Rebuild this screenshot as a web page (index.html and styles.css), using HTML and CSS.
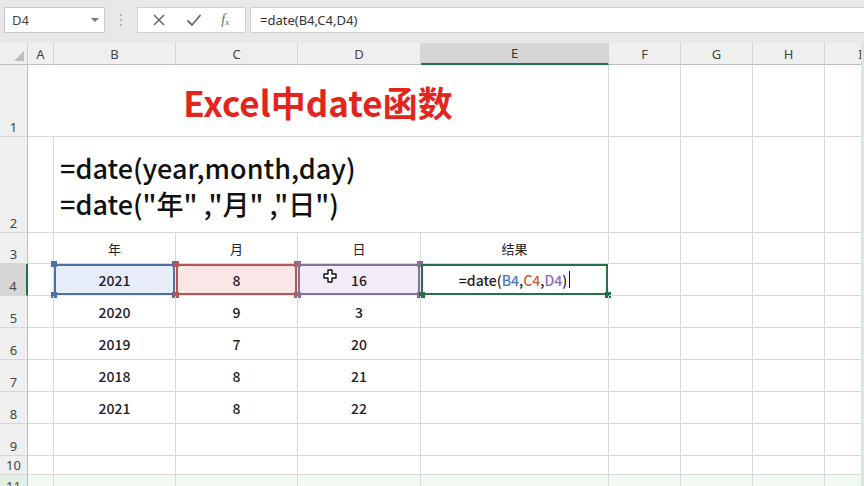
FILE: index.html
```html
<!DOCTYPE html>
<html>
<head>
<meta charset="utf-8">
<link rel="stylesheet" href="styles.css">
</head>
<body>
<div class="toolbar">
  <div class="namebox"><span class="ref">D4</span><span class="dd">
    <svg width="8" height="5" viewBox="0 0 8 5"><path d="M0 0 L8 0 L4 4 Z" fill="#777"/></svg></span></div>
  <div class="grip"><i></i><i></i><i></i></div>
  <div class="fxbtns">
    <svg width="14" height="14" viewBox="0 0 14 14"><path d="M2 2 L12 12 M12 2 L2 12" stroke="#6b6b6b" stroke-width="1.6" fill="none"/></svg>
    <svg width="16" height="14" viewBox="0 0 16 14"><path d="M1.5 7.5 L6 12 L14.5 2" stroke="#6b6b6b" stroke-width="1.8" fill="none"/></svg>
    <span class="fx">f<sub>x</sub></span>
  </div>
  <div class="formula">=date(B4,C4,D4)</div>
</div>

<div class="sheet">
  <!-- header row -->
  <div class="corner"><svg width="10" height="10" viewBox="0 0 10 10"><path d="M10 0 L10 10 L0 10 Z" fill="#bdbdbd"/></svg></div>
  <div class="ch">A</div><div class="ch">B</div><div class="ch">C</div><div class="ch">D</div>
  <div class="ch sel">E</div><div class="ch">F</div><div class="ch">G</div><div class="ch">H</div><div class="ch">I</div>

  <!-- row 1 -->
  <div class="rh">1</div>
  <div class="c title">Excel中date函数</div>
  <div class="c"></div><div class="c"></div><div class="c"></div><div class="c"></div>

  <!-- row 2 -->
  <div class="rh">2</div>
  <div class="c"></div>
  <div class="c syntax"><div>=date(year,month,day)</div><div>=date("年" ,"月" ,"日")</div></div>
  <div class="c"></div><div class="c"></div><div class="c"></div><div class="c"></div>

  <!-- row 3 -->
  <div class="rh">3</div>
  <div class="c"></div><div class="c hd">年</div><div class="c hd">月</div><div class="c hd">日</div><div class="c hd">结果</div>
  <div class="c"></div><div class="c"></div><div class="c"></div><div class="c"></div>

  <!-- row 4 -->
  <div class="rh sel">4</div>
  <div class="c"></div>
  <div class="c num rb">2021<i class="h tl"></i><i class="h tr"></i><i class="h bl"></i><i class="h br"></i></div>
  <div class="c num rc">8<i class="h tl"></i><i class="h tr"></i><i class="h bl"></i><i class="h br"></i></div>
  <div class="c num rd">16<svg class="cross" width="14" height="14" viewBox="0 0 14 14"><path d="M5 1 H9 V5 H13 V9 H9 V13 H5 V9 H1 V5 H5 Z" fill="#fff" stroke="#111" stroke-width="1.4" stroke-linejoin="round"/></svg><i class="h tl"></i><i class="h tr"></i><i class="h bl"></i><i class="h br"></i></div>
  <div class="c num re">=date(<span class="kb">B4</span>,<span class="kc">C4</span>,<span class="kd">D4</span>)<span class="caret"></span><i class="h bl"></i><i class="h br"></i></div>
  <div class="c"></div><div class="c"></div><div class="c"></div><div class="c"></div>

  <!-- row 5 -->
  <div class="rh">5</div>
  <div class="c"></div><div class="c num">2020</div><div class="c num">9</div><div class="c num">3</div><div class="c"></div>
  <div class="c"></div><div class="c"></div><div class="c"></div><div class="c"></div>

  <!-- row 6 -->
  <div class="rh">6</div>
  <div class="c"></div><div class="c num">2019</div><div class="c num">7</div><div class="c num">20</div><div class="c"></div>
  <div class="c"></div><div class="c"></div><div class="c"></div><div class="c"></div>

  <!-- row 7 -->
  <div class="rh">7</div>
  <div class="c"></div><div class="c num">2018</div><div class="c num">8</div><div class="c num">21</div><div class="c"></div>
  <div class="c"></div><div class="c"></div><div class="c"></div><div class="c"></div>

  <!-- row 8 -->
  <div class="rh">8</div>
  <div class="c"></div><div class="c num">2021</div><div class="c num">8</div><div class="c num">22</div><div class="c"></div>
  <div class="c"></div><div class="c"></div><div class="c"></div><div class="c"></div>

  <!-- row 9 -->
  <div class="rh">9</div>
  <div class="c"></div><div class="c"></div><div class="c"></div><div class="c"></div><div class="c"></div>
  <div class="c"></div><div class="c"></div><div class="c"></div><div class="c"></div>

  <!-- row 10 -->
  <div class="rh">10</div>
  <div class="c"></div><div class="c"></div><div class="c"></div><div class="c"></div><div class="c"></div>
  <div class="c"></div><div class="c"></div><div class="c"></div><div class="c"></div>

  <!-- row 11 -->
  <div class="rh last">11</div>
  <div class="c g"></div><div class="c g"></div><div class="c g"></div><div class="c g"></div><div class="c g"></div>
  <div class="c g"></div><div class="c g"></div><div class="c g"></div><div class="c g"></div>
</div>
<div class="edge"></div>
</body>
</html>
```
FILE: styles.css
```css
* { box-sizing: border-box; }
html, body { margin: 0; padding: 0; }
body {
  position: relative;
  width: 864px;
  height: 486px;
  overflow: hidden;
  background: #e8e8e8;
  font-family: "Noto Sans CJK SC", "Noto Sans", sans-serif;
  color: #222;
}

.toolbar {
  height: 43px;
  display: flex;
  align-items: flex-start;
  padding: 7px 0 0 4px;
  background: #e8e8e8;
}
.namebox {
  width: 101px;
  height: 26px;
  background: #fff;
  border: 1px solid #c8c8c8;
  display: flex;
  align-items: center;
  justify-content: space-between;
  padding: 0 5px 0 7px;
  font-family: "Noto Sans", "Liberation Sans", sans-serif;
  font-size: 13px;
  color: #444;
}
.dd { display: flex; align-items: center; }
.grip {
  width: 32px;
  height: 26px;
  display: flex;
  flex-direction: column;
  align-items: center;
  justify-content: center;
  gap: 3px;
}
.grip i { width: 2px; height: 2px; background: #b5b5b5; display: block; }
.fxbtns {
  width: 109px;
  height: 26px;
  background: #fff;
  border: 1px solid #d0d0d0;
  display: flex;
  align-items: center;
  justify-content: space-around;
  padding: 0 6px 0 4px;
}
.fx {
  font-family: "Liberation Serif", serif;
  font-style: italic;
  font-size: 14px;
  color: #6b6b6b;
}
.fx sub { font-size: 9px; vertical-align: -1px; }
.formula {
  flex: 1;
  height: 26px;
  margin-left: 4px;
  background: #fff;
  border: 1px solid #d0d0d0;
  border-right: none;
  padding-left: 9px;
  display: flex;
  align-items: center;
  font-family: "Noto Sans", "Liberation Sans", sans-serif;
  font-size: 13px;
  color: #333;
}

.sheet {
  display: grid;
  width: 897px;
  grid-template-columns: 28px 26px 122px 122px 123px 188px 72px 72px 72px 72px;
  grid-template-rows: 22px 72px 96px 31px 32px 32px 32px 32px 32px 32px 19px 12px;
  background: #fff;
}
.corner {
  background: #efefef;
  border-right: 1px solid #cfcfcf;
  border-bottom: 1px solid #bfbfbf;
  display: flex;
  align-items: flex-end;
  justify-content: flex-end;
  padding: 0 3px 3px 0;
}
.ch {
  background: #efefef;
  border-right: 1px solid #d4d4d4;
  border-bottom: 1px solid #bfbfbf;
  display: flex;
  align-items: center;
  justify-content: center;
  font-family: "Noto Sans", "Liberation Sans", sans-serif;
  font-size: 13px;
  color: #444;
}
.ch.sel {
  background: #d6d6d6;
  border-bottom: 2px solid #217346;
  color: #333;
}
.rh {
  background: #efefef;
  border-right: 1px solid #bfbfbf;
  border-bottom: 1px solid #d6d6d6;
  display: flex;
  align-items: flex-end;
  justify-content: center;
  padding-bottom: 1px;
  overflow: hidden;
  font-family: "Noto Sans", "Liberation Sans", sans-serif;
  font-size: 13px;
  line-height: 16px;
  color: #444;
}
.rh.sel {
  background: #d6d6d6;
  border-right: 2px solid #217346;
}
.rh.last {
  align-items: flex-start;
  padding: 3px 0 0;
  background: #e4efe6;
  border-bottom: none;
}
.c {
  position: relative;
  border-right: 1px solid #d9d9d9;
  border-bottom: 1px solid #d9d9d9;
  display: flex;
  align-items: center;
  justify-content: center;
}
.c.g { background: #f2f9f3; border-bottom: none; }

.title {
  grid-column: span 5;
  font-size: 35px;
  font-weight: 700;
  color: #e3261d;
  padding-top: 2px;
}
.syntax {
  grid-column: span 4;
  flex-direction: column;
  align-items: flex-start;
  justify-content: center;
  padding-left: 6px;
  padding-top: 2px;
  font-size: 27px;
  font-weight: 500;
  line-height: 36px;
  color: #111;
  white-space: pre;
}
.hd {
  font-size: 13px;
  color: #222;
}
.num {
  font-size: 14px;
  font-weight: 500;
  color: #222;
}

.rb { background: #e6ecf8; box-shadow: inset 0 0 0 2px #4d6fa3; border-color: transparent; }
.rc { background: #fbe6e6; box-shadow: inset 0 0 0 2px #b45757; border-color: transparent; }
.rd { background: #f3ebf7; box-shadow: inset 0 0 0 2px #8a6f99; border-color: transparent; }
.re { box-shadow: inset 0 0 0 2px #217346; border-color: transparent; }

.h {
  position: absolute;
  width: 6px;
  height: 6px;
  display: block;
}
.rb .h { background: #4d6fa3; }
.rc .h { background: #b45757; }
.rd .h { background: #8a6f99; }
.re .h { background: #217346; }
.h.tl { left: -3px; top: -3px; }
.h.tr { right: -3px; top: -3px; }
.h.bl { left: -3px; bottom: -3px; }
.h.br { right: -3px; bottom: -3px; }
.re .h.bl { left: -2px; bottom: -3px; }

.kb { color: #4a78c2; }
.kc { color: #d0603b; }
.kd { color: #8a6cb5; }
.caret {
  display: inline-block;
  width: 1px;
  height: 17px;
  background: #111;
  margin-left: 2px;
}
.cross {
  position: absolute;
  left: 25px;
  top: 5px;
}
.edge {
  position: absolute;
  right: 0;
  top: 43px;
  bottom: 0;
  width: 3px;
  background: #d3ecd7;
}
```
